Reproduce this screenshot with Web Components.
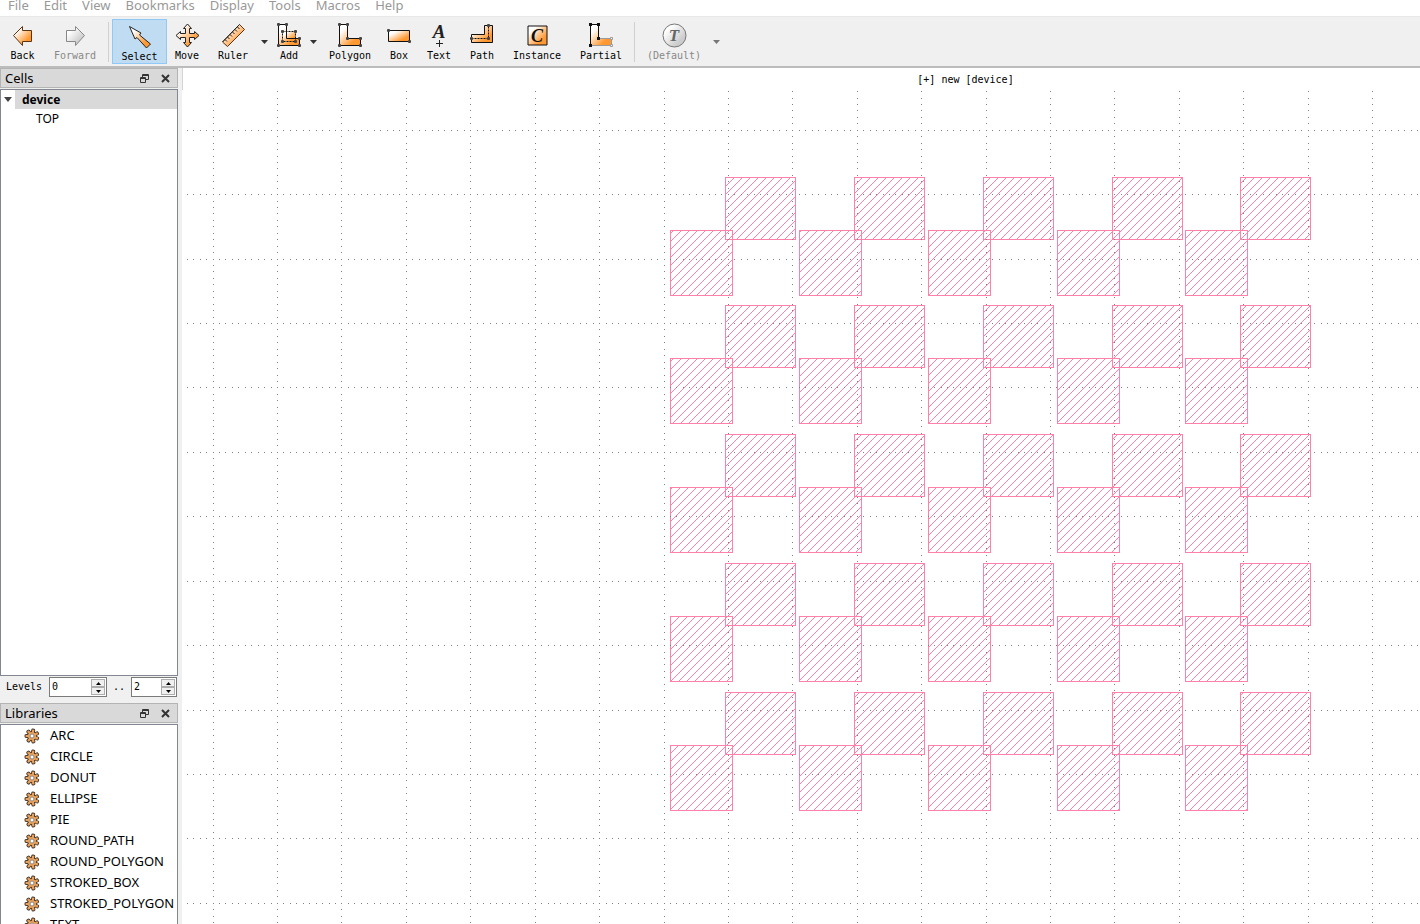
<!DOCTYPE html>
<html lang="en">
<head>
<meta charset="utf-8">
<title>Layout viewer</title>
<style>
html,body{height:100%}
body{margin:0;overflow:hidden;background:#fff;color:#000}
</style>
</head>
<body>
<layout-app></layout-app>
<script>
const UI = '"Noto Sans","Open Sans",sans-serif';
const MONO = '"DejaVu Sans Mono","Liberation Mono",monospace';
const make = (name, html, after) => customElements.define(name, class extends HTMLElement {
  constructor() {
    super();
    this.attachShadow({mode: 'open'}).innerHTML = typeof html === 'function' ? html(this) : html;
    if (after) after(this);
  }
});

const node = (x, y) => `<rect x="${x - 1}" y="${y - 1}" width="3" height="3" rx="1" fill="#444"/>`;
const grad = (id, a = '#fff', b = '#ff9830') => `<defs><linearGradient id="${id}" x1=".1" y1=".1" x2=".9" y2=".9"><stop offset=".15" stop-color="${a}"/><stop offset=".8" stop-color="${b}"/></linearGradient></defs>`;
const ICONS = {
  back: grad('g') + '<path d="M3.500 12.500 12.500 3.500V7.500H21.500V18.500H12.500V22.500Z" fill="url(#g)" stroke="#5b3413"/>',
  forward: grad('g', '#fff', '#ccc') + '<path d="M21.500 12.500 12.500 3.500V7.500H3.500V18.500H12.500V22.500Z" fill="url(#g)" stroke="#888"/>',
  select: grad('g') + '<path d="M2.500 2.500 14 9 12.500 11 23.500 20 19.500 24 10 13.500 8 15Z" fill="url(#g)" stroke="#222" stroke-linejoin="round"/>',
  move: grad('g') + '<path d="M12.500 1 16.500 5.500H14.500V10.500H19.500V8.500L24 12.500 19.500 16.500V14.500H14.500V19.500H16.500L12.500 24 8.500 19.500H10.500V14.500H5.500V16.500L1 12.500 5.500 8.500V10.500H10.500V5.500H8.500Z" fill="url(#g)" stroke="#222"/>',
  ruler: grad('g') + '<path d="M1.500 19 18.500 1.500 23.500 6.500 6.500 23.500Z" fill="url(#g)" stroke="#5b3413"/><path d="M1.500 19 18.500 1.500M4 16.500l2 2M6.500 14l2 2M9 11.500l2 2M11.500 9l2 2M14 6.500l2 2M16.500 4l2 2" fill="none" stroke="#222"/>',
  polygon: grad('g') + '<path d="M1.500 1.500H9.500V15.500H22.500V22.500H1.500Z" fill="url(#g)" stroke="#111"/>' + node(1,1)+node(9,1)+node(9,15)+node(22,15)+node(22,22)+node(1,22),
  add: grad('g') + '<path d="M1.500 1.500H9.500V15.500H22.500V22.500H1.500Z" fill="url(#g)" stroke="#111"/><path d="M5.500 8.500H18.500V18.500H5.500Z" fill="url(#g)" stroke="#111" stroke-dasharray="2 1"/><path d="M9.500 7V15.500H20" fill="none" stroke="#111"/>' + node(1,1)+node(9,1)+node(22,15)+node(22,22)+node(1,22)+node(5,8)+node(18,8)+node(5,18)+node(18,18),
  box: grad('g') + '<path d="M1.500 7.500H22.500V18.500H1.500Z" fill="url(#g)" stroke="#111"/>' + node(1,7)+node(22,18),
  text: '<text x="12" y="15" text-anchor="middle" font-family="Liberation Serif,serif" font-size="19" font-weight="bold" font-style="italic" fill="#222">A</text><path d="M12.500 17V24M9 20.500H16" stroke="#222"/>',
  path: grad('g') + '<path d="M1.500 11.500H14.500V2.500H22.500V19.500H1.500Z" fill="url(#g)" stroke="#111"/><path d="M1.500 15.500H18.500V2.500" fill="none" stroke="#111" stroke-dasharray="2 1"/>' + node(1,15)+node(18,15)+node(18,2),
  instance: grad('g') + '<path d="M3 3H22V22H3Z" fill="url(#g)" stroke="#111"/><text x="12" y="19" text-anchor="middle" font-family="Liberation Serif,serif" font-size="18" font-weight="bold" font-style="italic" fill="#111">C</text>',
  partial: grad('g') + '<path d="M1.500 1.500H9.500V15.500H22.500V22.500H1.500Z" fill="url(#g)"/><path d="M9.500 15.500H22.500V22.500H1.500" fill="none" stroke="#999"/><path d="M1.500 22.500V1.500H9.500V15.500" fill="none" stroke="#111"/><path d="M0 0h3v3H0zM8 0h3v3H8zM8 14h3v3H8zM0 21h3v3H0z" fill="#111"/><path d="M21.500 14.500h2v2h-2zM21.500 21.500h2v2h-2z" fill="#fff" stroke="#999"/>',
  default: grad('g', '#fff', '#ccc') + '<circle cx="12.500" cy="12.500" r="11.500" fill="url(#g)" stroke="#777"/><text x="12" y="18" text-anchor="middle" font-family="Liberation Serif,serif" font-size="17" font-weight="bold" font-style="italic" fill="#666">T</text>'
};

make('menu-bar', `<style>
:host{display:block;height:16px;background:#fff}
nav{display:flex;gap:15px;padding-left:8px}
button{all:unset;font:13px/10px ${UI};color:#999}
</style><nav>${['File','Edit','View','Bookmarks','Display','Tools','Macros','Help'].map(t => `<button>${t}</button>`).join('')}</nav>`);

make('tool-button', el => `<style>
:host{display:flex;box-sizing:border-box;height:45px;width:var(--w);flex:none}
button{all:unset;box-sizing:border-box;width:100%;height:100%;display:flex;flex-direction:column;align-items:center;padding-top:3px;border:1px solid transparent;font:10px/15px ${MONO};color:#000;white-space:nowrap}
:host([active]) button{background:#c0dcf3;border-color:#90c8f6;padding-top:4px}
:host([off]) button{color:#888}
svg{display:block;width:25px;height:25px;flex:none}
</style><button><svg viewBox="0 0 25 25">${ICONS[el.getAttribute('icon')]}</svg><slot></slot></button>`);

make('drop-arrow', `<style>
:host{display:flex;width:var(--w);flex:none;justify-content:center}
button{all:unset;display:flex;align-items:center}
svg{width:7px;height:4px;fill:currentColor}
</style><button aria-label="More"><svg viewBox="0 0 7 4"><path d="M0 0H7L3.500 4Z"/></svg></button>`);

const tool = (icon, label, w, extra = '') => `<tool-button icon="${icon}" style="--w:${w}px" ${extra}>${label}</tool-button>`;
make('tool-bar', `<style>
:host{display:flex;box-sizing:border-box;height:52px;padding-top:2px;background:#f0f0f0;border-top:1px solid #e8e8e8;border-bottom:2px solid #bcbcbc;overflow:hidden}
i{width:1px;height:40px;margin-top:3px;background:#d0d0d0;flex:none}
drop-arrow{color:#333;height:45px}
</style>` + tool('back','Back',45) + tool('forward','Forward',60,'off') + '<i style="margin-left:3px;margin-right:3px"></i>'
 + tool('select','Select',55,'active') + tool('move','Move',40) + tool('ruler','Ruler',52) + '<drop-arrow style="--w:11px"></drop-arrow>'
 + tool('add','Add',38) + '<drop-arrow style="--w:11px"></drop-arrow>' + tool('polygon','Polygon',62) + tool('box','Box',36) + tool('text','Text',44)
 + tool('path','Path',42) + tool('instance','Instance',68) + tool('partial','Partial',60) + '<i style="margin-left:3px;margin-right:4px"></i>'
 + tool('default','(Default)',70,'off') + '<drop-arrow style="--w:15px;color:#777"></drop-arrow>');

make('dock-title', `<style>
:host{display:flex;align-items:center;box-sizing:border-box;height:20px;width:178px;padding:0 7px 0 4px;background:#d9d9d9;border:1px solid #b4b4b4;font:13px/18px ${UI}}
span{flex:1}
button{all:unset;display:flex;margin-left:12px}
svg{width:9px;height:9px;fill:none;stroke:#333}
</style><span><slot></slot></span>
<button aria-label="Float"><svg viewBox="0 0 9 9"><path d="M2.500 3V.5H8.500V5.500H6M.5 3.500H5.500V8.500H.5ZM3 1.500H8M.5 4.500H5.500"/></svg></button>
<button aria-label="Close"><svg viewBox="0 0 9 9"><path d="M1 1 8 8M8 1 1 8" stroke-width="2"/></svg></button>`);

make('cell-tree', `<style>
:host{display:block;box-sizing:border-box;width:178px;background:#fff;border:1px solid #828790;font:12px/19px ${UI}}
ul{list-style:none;margin:0;padding:0}
.top{display:flex;font-weight:bold}
.top svg{width:8px;height:5px;margin:7px 3px 0 3px}
.top span{flex:1;background:#d9d9d9;padding-left:7px;height:19px}
.kid{padding-left:35px}
</style><ul><li><div class="top"><svg viewBox="0 0 8 5"><path d="M0 0H8L4 5Z" fill="#444"/></svg><span>device</span></div><ul><li class="kid">TOP</li></ul></li></ul>`);

make('level-box', el => `<style>
:host{display:flex;box-sizing:border-box;width:var(--w);height:20px;border:1px solid #7a7a7a;background:#fff;flex:none}
input{all:unset;flex:1;min-width:0;padding-left:2px;font:10px/18px ${MONO}}
div{display:flex;flex-direction:column;width:14px;margin:1px}
button{all:unset;box-sizing:border-box;flex:1;display:flex;align-items:center;justify-content:center;border:1px solid #adadad;background:#f0f0f0}
svg{width:5px;height:3px}
</style><input type="text" aria-label="${el.getAttribute('label')}" value="${el.getAttribute('value')}"><div>
<button aria-label="Up"><svg viewBox="0 0 5 3"><path d="M0 3H5L2.500 0Z"/></svg></button>
<button aria-label="Down"><svg viewBox="0 0 5 3"><path d="M0 0H5L2.500 3Z"/></svg></button></div>`);

make('level-range', `<style>
:host{display:flex;align-items:center;height:27px;padding-left:6px;font:10px/16px ${MONO};box-sizing:border-box;padding-bottom:5px}
.l{width:43px}.d{width:24px;text-align:center}
</style><span class="l">Levels</span><level-box label="From level" value="0" style="--w:58px"></level-box><span class="d">..</span><level-box label="To level" value="2" style="--w:46px"></level-box>`);

const gear = `<svg viewBox="-8 -8 16 16"><g fill="#e9a25b" stroke="#4a3a2c">${[0,1,2,3,4,5,6].map(i => `<rect x="-1.500" y="-7" width="3" height="5" rx="1" transform="rotate(${i*360/7+12})"/>`).join('')}<circle r="4.500"/></g>${[0,1,2,3,4,5,6].map(i => `<rect x="-1" y="-6" width="2" height="4" fill="#e9a25b" transform="rotate(${i*360/7+12})"/>`).join('')}<circle r="2" fill="#fff" stroke="#888"/></svg>`;
make('library-list', `<style>
:host{display:block;box-sizing:border-box;width:178px;background:#fff;border:1px solid #828790;border-bottom:0;overflow:hidden;font:13px/21px ${UI}}
ul{list-style:none;margin:0;padding:0}
li{display:flex;align-items:center;height:21px;padding-left:23px;gap:10px;white-space:nowrap}
svg{width:16px;height:16px;flex:none}
</style><ul>${['ARC','CIRCLE','DONUT','ELLIPSE','PIE','ROUND_PATH','ROUND_POLYGON','STROKED_BOX','STROKED_POLYGON','TEXT'].map(t => `<li>${gear}<span>${t}</span></li>`).join('')}</ul>`);

make('layout-canvas', `<style>
:host{display:flex;flex-direction:column;background:#fff;overflow:hidden;min-width:0}
header{height:22px;padding-left:328px;text-align:center;font:10px/24px ${MONO};flex:none;border-left:1px solid #d4d4d4}
svg{display:block;width:100%;flex:1;min-height:0;shape-rendering:crispEdges}
</style><header>[+] new [device]</header><svg></svg>`, el => {
  // Drawing units are window pixels; the view starts at the pane's top-left corner.
  const OX = 182, OY = 90, STEP = 64.42, GX = 213.08, GY = 130.25, W = 2600, H = 1600;
  let dots = '';
  const dot = (x, y) => { dots += `M${Math.floor(x) - OX} ${Math.floor(y) - OY}h1v1h-1z`; };
  for (let x = GX; x < W; x += STEP) for (let j = -6; GY + j * STEP / 10 < H; j++) dot(x, GY + j * STEP / 10);
  for (let y = GY; y < H; y += STEP) for (let j = -4; GX + j * STEP / 10 < W; j++) dot(GX + j * STEP / 10, y);
  const box = (x, y, w, h) => `<rect x="${x - OX + .5}" y="${y - OY + .5}" width="${w}" height="${h}"/>`;
  let boxes = '';
  [177, 305, 434, 563, 692].forEach(y => [725, 854, 983, 1112, 1240].forEach(x => {
    boxes += box(x, y, 70, 62) + box(x - 55, y + 53, 62, 65);
  }));
  let px = '';
  for (let i = 0; i < 8; i++) px += `<rect x="${i}" y="${7 - i}" width="1" height="1" fill="#ff80a8"/>`;
  el.shadowRoot.querySelector('svg').innerHTML = `<defs><pattern id="h" width="8" height="8" patternUnits="userSpaceOnUse">${px}</pattern></defs>
<g fill="url(#h)" stroke="#ff80a8">${boxes}</g><path d="${dots}" fill="#808080"/>`;
});

make('layout-app', `<style>
:host{display:flex;flex-direction:column;height:100vh;overflow:hidden}
main{display:flex;flex:1;min-height:0}
aside{display:flex;flex-direction:column;width:182px;flex:none;background:#f0f0f0;min-height:0}
cell-tree{flex:1;margin-top:1px}
library-list{height:200px;margin-top:1px;flex:none}
layout-canvas{flex:1}
</style><menu-bar></menu-bar><tool-bar></tool-bar><main><aside><dock-title>Cells</dock-title><cell-tree></cell-tree><level-range></level-range><dock-title>Libraries</dock-title><library-list></library-list></aside><layout-canvas></layout-canvas></main>`);
</script>
</body>
</html>
